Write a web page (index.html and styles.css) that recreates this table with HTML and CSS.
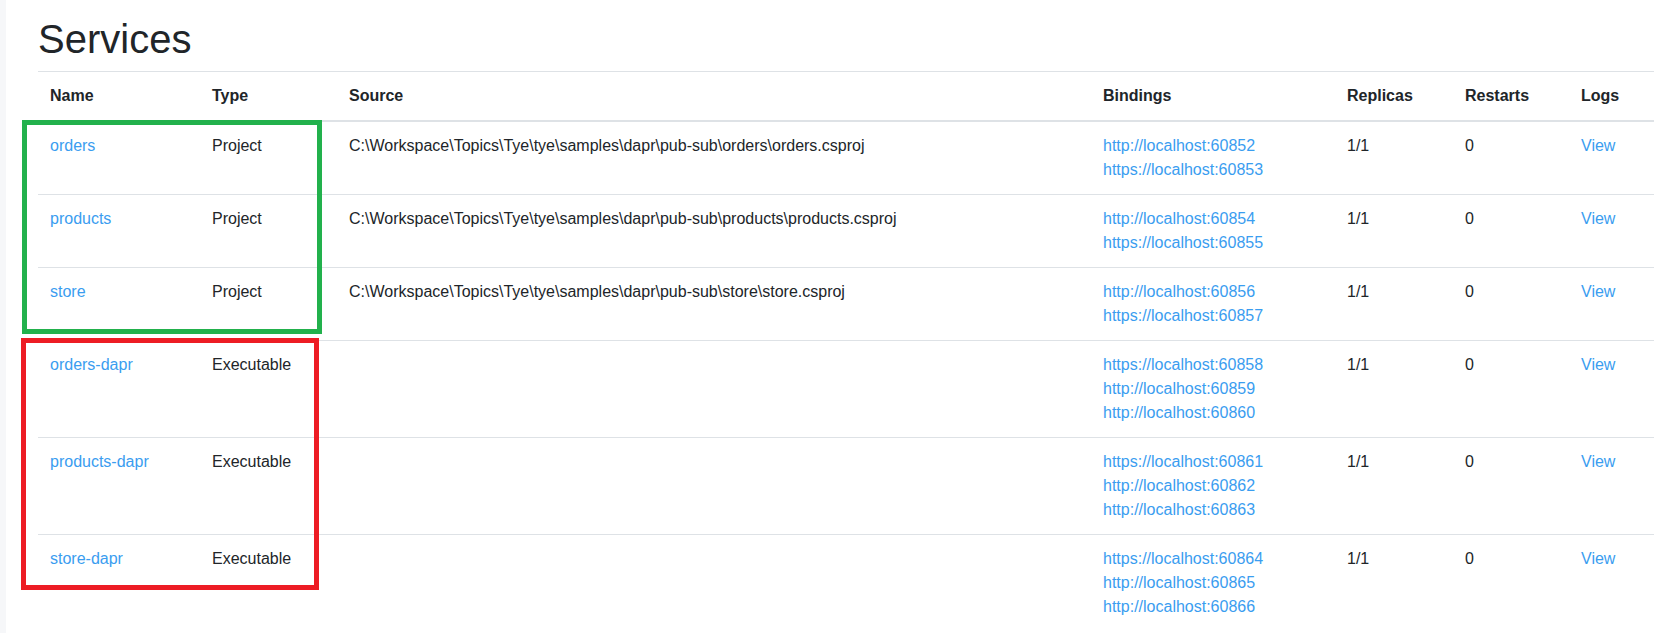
FILE: index.html
```html
<!DOCTYPE html>
<html lang="en">
<head>
<meta charset="utf-8">
<title>Services</title>
<link rel="stylesheet" href="styles.css">
</head>
<body>
<div class="layout">
  <div class="sidebar"></div>
  <main class="main">
    <h1 class="title">Services</h1>
    <div class="table-wrap">
      <table class="table">
        <colgroup>
          <col class="c-name"><col class="c-type"><col class="c-source"><col class="c-bind"><col class="c-rep"><col class="c-rest"><col class="c-logs">
        </colgroup>
        <thead>
          <tr><th>Name</th><th>Type</th><th>Source</th><th>Bindings</th><th>Replicas</th><th>Restarts</th><th>Logs</th></tr>
        </thead>
        <tbody>
          <tr>
            <td><a href="#">orders</a></td><td>Project</td>
            <td>C:\Workspace\Topics\Tye\tye\samples\dapr\pub-sub\orders\orders.csproj</td>
            <td><a class="binding" href="#">http://localhost:60852</a><a class="binding" href="#">https://localhost:60853</a></td>
            <td>1/1</td><td>0</td><td><a href="#">View</a></td>
          </tr>
          <tr>
            <td><a href="#">products</a></td><td>Project</td>
            <td>C:\Workspace\Topics\Tye\tye\samples\dapr\pub-sub\products\products.csproj</td>
            <td><a class="binding" href="#">http://localhost:60854</a><a class="binding" href="#">https://localhost:60855</a></td>
            <td>1/1</td><td>0</td><td><a href="#">View</a></td>
          </tr>
          <tr>
            <td><a href="#">store</a></td><td>Project</td>
            <td>C:\Workspace\Topics\Tye\tye\samples\dapr\pub-sub\store\store.csproj</td>
            <td><a class="binding" href="#">http://localhost:60856</a><a class="binding" href="#">https://localhost:60857</a></td>
            <td>1/1</td><td>0</td><td><a href="#">View</a></td>
          </tr>
          <tr>
            <td><a href="#">orders-dapr</a></td><td>Executable</td>
            <td></td>
            <td><a class="binding" href="#">https://localhost:60858</a><a class="binding" href="#">http://localhost:60859</a><a class="binding" href="#">http://localhost:60860</a></td>
            <td>1/1</td><td>0</td><td><a href="#">View</a></td>
          </tr>
          <tr>
            <td><a href="#">products-dapr</a></td><td>Executable</td>
            <td></td>
            <td><a class="binding" href="#">https://localhost:60861</a><a class="binding" href="#">http://localhost:60862</a><a class="binding" href="#">http://localhost:60863</a></td>
            <td>1/1</td><td>0</td><td><a href="#">View</a></td>
          </tr>
          <tr>
            <td><a href="#">store-dapr</a></td><td>Executable</td>
            <td></td>
            <td><a class="binding" href="#">https://localhost:60864</a><a class="binding" href="#">http://localhost:60865</a><a class="binding" href="#">http://localhost:60866</a></td>
            <td>1/1</td><td>0</td><td><a href="#">View</a></td>
          </tr>
        </tbody>
      </table>
      <div class="mark mark-green"></div>
      <div class="mark mark-red"></div>
    </div>
  </main>
</div>
</body>
</html>
```

FILE: styles.css
```css
html, body {
  margin: 0;
  padding: 0;
  background: #ffffff;
  overflow: hidden;
}

body {
  font-family: "Liberation Sans", Arial, sans-serif;
  font-size: 16px;
  line-height: 1.5;
  color: #212529;
}

.layout {
  display: flex;
  min-height: 633px;
}

.sidebar {
  width: 6px;
  flex: 0 0 6px;
  background: #f6f7f9;
}

.main {
  flex: 1 1 auto;
  padding: 15px 0 0 32px;
  min-width: 0;
}

.title {
  margin: 0 0 8px 0;
  font-size: 40px;
  font-weight: 400;
  line-height: 1.2;
  color: #212529;
}

.table-wrap {
  position: relative;
}

.table {
  width: 1616px;
  border-collapse: collapse;
  table-layout: fixed;
}

.c-name { width: 162px; }
.c-type { width: 137px; }
.c-source { width: 754px; }
.c-bind { width: 244px; }
.c-rep { width: 118px; }
.c-rest { width: 116px; }
.c-logs { width: 85px; }

.table th,
.table td {
  padding: 12px;
  vertical-align: top;
  text-align: left;
  border-top: 1px solid #dee2e6;
  white-space: nowrap;
}

.table thead th {
  font-weight: 700;
  vertical-align: bottom;
  border-bottom: 2px solid #dee2e6;
}

a {
  color: #3a9df0;
  text-decoration: none;
}

.binding {
  display: block;
}

.mark {
  position: absolute;
  box-sizing: border-box;
  border: 5px solid;
  pointer-events: none;
}

.mark-green {
  border-color: #22b14c;
  left: -16px;
  top: 49px;
  width: 300px;
  height: 214px;
}

.mark-red {
  border-color: #ed1c24;
  left: -17px;
  top: 267px;
  width: 298px;
  height: 252px;
}
```
